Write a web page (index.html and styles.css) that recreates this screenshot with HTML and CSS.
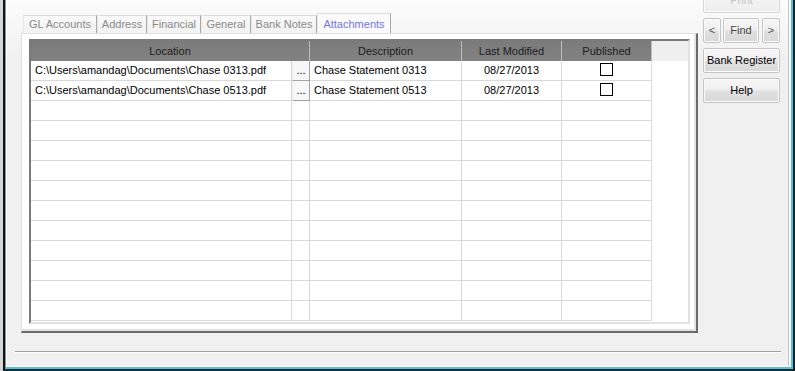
FILE: index.html
```html
<!DOCTYPE html>
<html>
<head>
<meta charset="utf-8">
<link rel="stylesheet" href="styles.css">
</head>
<body>
<div class="frame"><div class="frame2"><div class="frame3">
  <div class="client">
    <div class="main">
      <div class="left">
        <div class="tabs">
          <div class="tab tab-gl">GL Accounts</div>
          <div class="tab tab-address">Address</div>
          <div class="tab tab-financial">Financial</div>
          <div class="tab tab-general">General</div>
          <div class="tab tab-notes">Bank Notes</div>
          <div class="tab tab-attach active">Attachments</div>
        </div>
        <div class="panel">
          <div class="grid">
            <div class="hrow">
              <div class="hcell">Location</div>
              <div class="hcell">Description</div>
              <div class="hcell">Last Modified</div>
              <div class="hcell">Published</div>
              <div class="hfill"></div>
            </div>
            <div class="row">
              <div class="cell">C:\Users\amandag\Documents\Chase 0313.pdf</div>
              <div class="cell btn">...</div>
              <div class="cell">Chase Statement 0313</div>
              <div class="cell center">08/27/2013</div>
              <div class="cell chk"><span class="check"></span></div>
              <div class="fill"></div>
            </div>
            <div class="row">
              <div class="cell">C:\Users\amandag\Documents\Chase 0513.pdf</div>
              <div class="cell btn">...</div>
              <div class="cell">Chase Statement 0513</div>
              <div class="cell center">08/27/2013</div>
              <div class="cell chk"><span class="check"></span></div>
              <div class="fill"></div>
            </div>
            <div class="row"><div class="cell"></div><div class="cell"></div><div class="cell"></div><div class="cell"></div><div class="cell"></div><div class="fill"></div></div>
            <div class="row"><div class="cell"></div><div class="cell"></div><div class="cell"></div><div class="cell"></div><div class="cell"></div><div class="fill"></div></div>
            <div class="row"><div class="cell"></div><div class="cell"></div><div class="cell"></div><div class="cell"></div><div class="cell"></div><div class="fill"></div></div>
            <div class="row"><div class="cell"></div><div class="cell"></div><div class="cell"></div><div class="cell"></div><div class="cell"></div><div class="fill"></div></div>
            <div class="row"><div class="cell"></div><div class="cell"></div><div class="cell"></div><div class="cell"></div><div class="cell"></div><div class="fill"></div></div>
            <div class="row"><div class="cell"></div><div class="cell"></div><div class="cell"></div><div class="cell"></div><div class="cell"></div><div class="fill"></div></div>
            <div class="row"><div class="cell"></div><div class="cell"></div><div class="cell"></div><div class="cell"></div><div class="cell"></div><div class="fill"></div></div>
            <div class="row"><div class="cell"></div><div class="cell"></div><div class="cell"></div><div class="cell"></div><div class="cell"></div><div class="fill"></div></div>
            <div class="row"><div class="cell"></div><div class="cell"></div><div class="cell"></div><div class="cell"></div><div class="cell"></div><div class="fill"></div></div>
            <div class="row"><div class="cell"></div><div class="cell"></div><div class="cell"></div><div class="cell"></div><div class="cell"></div><div class="fill"></div></div>
            <div class="row"><div class="cell"></div><div class="cell"></div><div class="cell"></div><div class="cell"></div><div class="cell"></div><div class="fill"></div></div>
          </div>
        </div>
      </div>
      <div class="side">
        <div class="button disabled">Print</div>
        <div class="nav">
          <div class="button small">&lt;</div>
          <div class="button find">Find</div>
          <div class="button small">&gt;</div>
        </div>
        <div class="button">Bank Register</div>
        <div class="button">Help</div>
      </div>
    </div>
    <div class="sep"></div>
  </div>
</div></div></div>
</body>
</html>
```

FILE: styles.css
```css
html, body {
  margin: 0;
  padding: 0;
}
body {
  width: 795px;
  height: 371px;
  overflow: hidden;
  background: #d6d6d6;
  font-family: "Liberation Sans", Arial, sans-serif;
  font-size: 11px;
  color: #000;
}
.frame {
  margin-left: 3px;
  height: 371px;
  box-sizing: border-box;
  border-left: 2px solid #141414;
  border-right: 2px solid #1c1c1c;
  border-bottom: 2px solid #1e2a30;
}
.frame2 {
  height: 100%;
  box-sizing: border-box;
  border-left: 1px solid #7f93a3;
  border-right: 2px solid #3ec6ee;
  border-bottom: 2px solid #3ec6ee;
}
.frame3 {
  height: 100%;
  box-sizing: border-box;
  border-left: 1px solid #ffffff;
  border-right: 2px solid #ffffff;
  border-bottom: 1px solid #ffffff;
}
.client {
  height: 100%;
  box-sizing: border-box;
  border-right: 1px solid #c6c6c6;
  background: linear-gradient(#fcfcfc 0px, #f6f6f6 30px, #f0f0f0 60px, #f0f0f0 100%);
}
.main {
  display: flex;
  gap: 5px;
  padding-left: 14px;
}
.left {
  width: 677px;
  padding-top: 13px;
}
.tabs {
  display: flex;
  align-items: flex-end;
  height: 20px;
  padding-left: 2px;
}
.tab {
  height: 18px;
  box-sizing: border-box;
  padding: 0;
  text-align: center;
  line-height: 17px;
  color: #8a8a8a;
  background: linear-gradient(#f9f9f9, #f2f2f2);
  border-top: 1px solid #dcdcdc;
  border-left: 1px solid #e8e8e8;
  border-right: 1px solid #a9a9a9;
  white-space: nowrap;
}
.tab-gl { width: 74px; }
.tab-address { width: 50px; }
.tab-financial { width: 54px; }
.tab-general { width: 50px; }
.tab-notes { width: 66px; }
.tab-attach { width: 74px; }
.tab.active {
  height: 20px;
  padding-top: 1px;
  line-height: 18px;
  color: #7474f0;
  background: #fafafa;
}
.panel {
  width: 677px;
  height: 300px;
  box-sizing: border-box;
  background: #fff;
  border-top: 1px solid #e0e0e0;
  border-left: 1px solid #e0e0e0;
  border-right: 2px solid #6b6b6b;
  border-bottom: 2px solid #6b6b6b;
  box-shadow: inset -2px -2px 0 #e3e3e3;
  padding: 5px 0 0 7px;
}
.grid {
  width: 661px;
  height: 285px;
  box-sizing: border-box;
  border-top: 2px solid #7a7a7a;
  border-left: 2px solid #7a7a7a;
  border-right: 2px solid #e2e2e2;
  border-bottom: 2px solid #e2e2e2;
  background: #fff;
}
.hrow {
  display: grid;
  grid-template-columns: 279px 152px 100px 90px 1fr;
  height: 20px;
}
.hcell {
  background: linear-gradient(#7b7b7b, #828282);
  border-right: 1px solid #bdbdbd;
  text-align: center;
  line-height: 20px;
  color: #1c1c1c;
  white-space: nowrap;
}
.hfill {
  background: #efefef;
}
.row {
  display: grid;
  grid-template-columns: 261px 18px 152px 100px 90px 1fr;
  height: 20px;
}
.cell {
  box-sizing: border-box;
  border-right: 1px solid #d9d9d9;
  border-bottom: 1px solid #d9d9d9;
  padding-left: 4px;
  line-height: 19px;
  white-space: nowrap;
  overflow: hidden;
}
.cell.btn {
  padding: 0;
  text-align: center;
  background: #f7f7f7;
  border-left: 1px solid #ececec;
  border-right-color: #a2a2a2;
  border-bottom-color: #a2a2a2;
}
.cell.center {
  padding: 0;
  text-align: center;
}
.cell.chk {
  padding: 2px 0 0 0;
  display: flex;
  justify-content: center;
  align-items: flex-start;
}
.check {
  width: 13px;
  height: 13px;
  box-sizing: border-box;
  border: 1px solid #000;
  background: #fff;
}
.side {
  width: 77px;
  display: flex;
  flex-direction: column;
  gap: 5px;
  margin-top: -12px;
}
.nav {
  display: flex;
  gap: 2px;
}
.button {
  height: 25px;
  box-sizing: border-box;
  border: 1px solid #c6c6c6;
  border-radius: 2px;
  background: linear-gradient(#f7f7f7 0%, #efefef 45%, #e0e0e0 55%, #d8d8d8 100%);
  box-shadow: inset 0 0 0 1px #fafafa;
  text-align: center;
  line-height: 23px;
  color: #000;
  white-space: nowrap;
}
.button.disabled {
  color: #c6c6c6;
  background: linear-gradient(#f7f7f7, #eeeeee);
  border-color: #d6d6d6;
}
.button.small {
  width: 18px;
  color: #555;
}
.button.find {
  flex: 1;
  color: #444;
}
.nav .small:last-child {
  margin-left: 1px;
}
.sep {
  margin: 18px 0 0 8px;
  width: 766px;
  height: 1px;
  background: #a0a0a0;
  border-bottom: 1px solid #ffffff;
}
```
